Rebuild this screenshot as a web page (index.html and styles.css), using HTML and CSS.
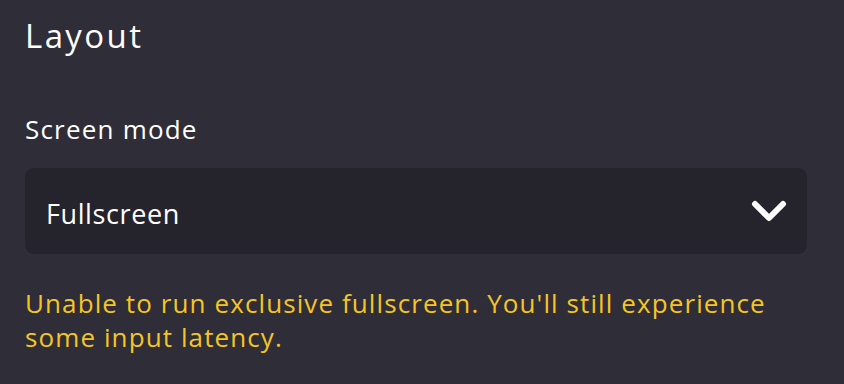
FILE: index.html
```html
<!DOCTYPE html>
<html>
<head>
<meta charset="utf-8">
<link rel="stylesheet" href="styles.css">
</head>
<body>
<main class="panel">
  <h1 class="title">Layout</h1>
  <label class="label">Screen mode</label>
  <div class="select">
    <span class="select-value">Fullscreen</span>
    <svg class="chevron" width="36" height="24" viewBox="0 0 36 24">
      <path d="M4 5 L18 19 L32 5" fill="none" stroke="#ffffff" stroke-width="6" stroke-linecap="round" stroke-linejoin="round"/>
    </svg>
  </div>
  <p class="warning">Unable to run exclusive fullscreen. You'll still experience some input latency.</p>
</main>
</body>
</html>
```
FILE: styles.css
```css
html, body {
  margin: 0;
  padding: 0;
  background: #2f2d38;
  width: 844px;
  height: 384px;
  overflow: hidden;
}
.panel {
  display: flex;
  flex-direction: column;
  padding: 14px 37px 0 25px;
  font-family: "Open Sans", sans-serif;
  color: #ffffff;
}
.title {
  margin: 0;
  font-size: 33px;
  font-weight: 400;
  line-height: 44px;
  letter-spacing: 2.4px;
}
.label {
  margin-top: 56px;
  font-size: 26px;
  line-height: 30px;
  letter-spacing: 1.2px;
}
.select {
  margin-top: 24px;
  height: 86px;
  box-sizing: border-box;
  background: #25232c;
  border-radius: 9px;
  display: flex;
  align-items: center;
  justify-content: space-between;
  padding: 0 20px 0 21px;
}
.select-value {
  font-size: 27px;
  margin-top: 4px;
  letter-spacing: 0.6px;
}
.chevron {
  display: block;
}
.warning {
  margin: 32px 0 0;
  font-size: 26px;
  line-height: 34px;
  color: #f5c523;
  max-width: 770px;
  letter-spacing: 1.1px;
}
```
